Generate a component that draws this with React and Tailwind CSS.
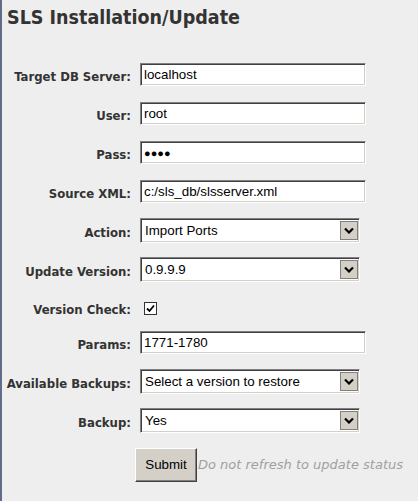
const labelFont = { fontFamily: '"DejaVu Sans Condensed", "DejaVu Sans", sans-serif' }

const Row = ({ label, children, className = 'h-[39px]' }) => (
  <div className={`flex items-center ${className}`}>
    <span
      className="w-[129px] shrink-0 text-right text-[13px] font-bold text-[#333] [font-stretch:condensed] pt-[4px]"
      style={labelFont}
    >
      {label}
    </span>
    <div className="ml-[9px] flex items-center">{children}</div>
  </div>
)

const TextBox = ({ value, small }) => (
  <input
    type="text"
    value={value}
    readOnly
    className={`w-[226px] h-[23px] bg-white px-[3px] text-black outline-none border border-t-[#808080] border-l-[#808080] border-r-white border-b-white shadow-[inset_1px_1px_0_#404040,inset_-1px_-1px_0_#d4d0c8] font-['Liberation_Sans',Arial,sans-serif] ${small ? 'text-[11px]' : 'text-[13.33px]'}`}
  />
)

const SelectBox = ({ value }) => (
  <div className="w-[220px] h-[25px] bg-white flex items-center border border-t-[#808080] border-l-[#808080] border-r-white border-b-white shadow-[inset_1px_1px_0_#404040,inset_-1px_-1px_0_#d4d0c8]">
    <span className="flex-1 pl-[4px] text-[13.33px] text-black font-['Liberation_Sans',Arial,sans-serif]">{value}</span>
    <span className="mr-[1px] w-[18px] h-[19px] bg-[#d4d0c8] border border-[#808080] flex items-center justify-center">
      <svg width="10" height="7" viewBox="0 0 10 7">
        <path d="M1 1.5 L5 5.5 L9 1.5" fill="none" stroke="#000" strokeWidth="2.2" />
      </svg>
    </span>
  </div>
)

export default function App() {
  return (
    <div className="min-h-[501px] bg-[#eeeeee] border-l-2 border-l-[#5f6e86]">
      <h1
        className="pl-[5px] pt-[5px] text-[19.5px] leading-[26px] font-bold text-[#333] [font-stretch:condensed]"
        style={labelFont}
      >
        SLS Installation/Update
      </h1>
      <div className="mt-[24px] flex flex-col">
        <Row label="Target DB Server:">
          <TextBox value="localhost" />
        </Row>
        <Row label="User:">
          <TextBox value="root" />
        </Row>
        <Row label="Pass:">
          <TextBox value="●●●●" small />
        </Row>
        <Row label="Source XML:">
          <TextBox value="c:/sls_db/slsserver.xml" />
        </Row>
        <Row label="Action:">
          <SelectBox value="Import Ports" />
        </Row>
        <Row label="Update Version:">
          <SelectBox value="0.9.9.9" />
        </Row>
        <Row label="Version Check:" className="h-[34px] pt-[4px]">
          <span className="ml-[4px] w-[13px] h-[13px] bg-white border border-[#333] flex items-center justify-center">
            <svg width="9" height="9" viewBox="0 0 9 9">
              <path d="M1 4.5 L3.5 7 L8 1.5" fill="none" stroke="#000" strokeWidth="1.8" />
            </svg>
          </span>
        </Row>
        <Row label="Params:">
          <TextBox value="1771-1780" />
        </Row>
        <Row label="Available Backups:">
          <SelectBox value="Select a version to restore" />
        </Row>
        <Row label="Backup:">
          <SelectBox value="Yes" />
        </Row>
        <div className="flex items-center h-[50px] pl-[133px]">
          <button className="w-[62px] h-[34px] bg-[#d4d0c8] text-[13.33px] text-black border border-t-white border-l-white border-r-[#404040] border-b-[#404040] shadow-[inset_-1px_-1px_0_#808080] font-['Liberation_Sans',Arial,sans-serif]">
            Submit
          </button>
          <span className="pl-[1px] text-[13px] italic text-[#a0a0a0] font-['DejaVu_Sans',sans-serif]">
            Do not refresh to update status
          </span>
        </div>
      </div>
    </div>
  )
}
